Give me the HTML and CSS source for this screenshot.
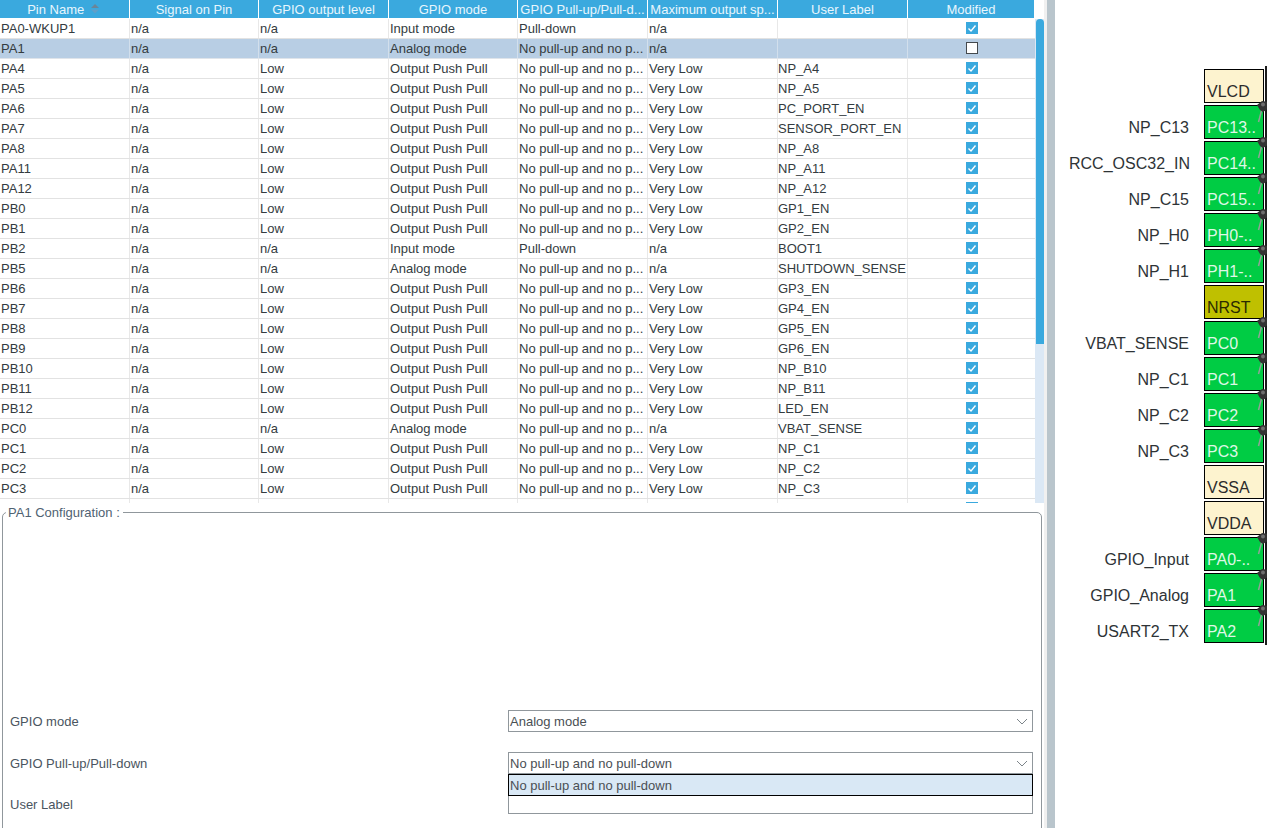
FILE: index.html
```html
<!DOCTYPE html>
<html lang="en">
<head>
<meta charset="utf-8">
<title>Pin configuration</title>
<link rel="stylesheet" href="styles.css">
</head>
<body>
<svg class="defs" width="1" height="1" aria-hidden="true">
  <symbol id="ck" viewBox="0 0 12 12"><rect width="12" height="12" fill="#3aa9de"/><path d="M2.5 6.5 L5 9 L9.5 3.5" fill="none" stroke="#fff" stroke-width="1.4"/></symbol>
  <symbol id="ball" viewBox="0 0 30 30"><path d="M24 9 L20.5 22" stroke="#93a098" stroke-width="1.5"/><path d="M19 5 L24 1 L30 2 L30 9 L25 12 L22 10 Z" fill="#333"/><circle cx="25" cy="4.5" r="2" fill="#6e6e6e"/></symbol>
</svg>
<div class="app">
  <main class="left">
    <div class="tablewrap">
      <div class="table">
        <div class="tbody">
          <div class="row head"><span class="c">Pin Name <svg class="sort" width="8" height="10" viewBox="0 0 8 10"><path d="M4 0 L8 4 H0 Z" fill="#6b8598"/><path d="M0 5.5 H8 L4 9.5 Z" fill="#5f9fc9"/></svg></span><span class="c">Signal on Pin</span><span class="c">GPIO output level</span><span class="c">GPIO mode</span><span class="c">GPIO Pull-up/Pull-d...</span><span class="c">Maximum output sp...</span><span class="c">User Label</span><span class="c">Modified</span></div>
          <div class="row"><span>PA0-WKUP1</span><span>n/a</span><span>n/a</span><span>Input mode</span><span>Pull-down</span><span>n/a</span><span></span><span class="m"><svg class="box"><use href="#ck"/></svg></span></div>
          <div class="row sel"><span>PA1</span><span>n/a</span><span>n/a</span><span>Analog mode</span><span>No pull-up and no p...</span><span>n/a</span><span></span><span class="m"><i class="unck"></i></span></div>
          <div class="row"><span>PA4</span><span>n/a</span><span>Low</span><span>Output Push Pull</span><span>No pull-up and no p...</span><span>Very Low</span><span>NP_A4</span><span class="m"><svg class="box"><use href="#ck"/></svg></span></div>
          <div class="row"><span>PA5</span><span>n/a</span><span>Low</span><span>Output Push Pull</span><span>No pull-up and no p...</span><span>Very Low</span><span>NP_A5</span><span class="m"><svg class="box"><use href="#ck"/></svg></span></div>
          <div class="row"><span>PA6</span><span>n/a</span><span>Low</span><span>Output Push Pull</span><span>No pull-up and no p...</span><span>Very Low</span><span>PC_PORT_EN</span><span class="m"><svg class="box"><use href="#ck"/></svg></span></div>
          <div class="row"><span>PA7</span><span>n/a</span><span>Low</span><span>Output Push Pull</span><span>No pull-up and no p...</span><span>Very Low</span><span>SENSOR_PORT_EN</span><span class="m"><svg class="box"><use href="#ck"/></svg></span></div>
          <div class="row"><span>PA8</span><span>n/a</span><span>Low</span><span>Output Push Pull</span><span>No pull-up and no p...</span><span>Very Low</span><span>NP_A8</span><span class="m"><svg class="box"><use href="#ck"/></svg></span></div>
          <div class="row"><span>PA11</span><span>n/a</span><span>Low</span><span>Output Push Pull</span><span>No pull-up and no p...</span><span>Very Low</span><span>NP_A11</span><span class="m"><svg class="box"><use href="#ck"/></svg></span></div>
          <div class="row"><span>PA12</span><span>n/a</span><span>Low</span><span>Output Push Pull</span><span>No pull-up and no p...</span><span>Very Low</span><span>NP_A12</span><span class="m"><svg class="box"><use href="#ck"/></svg></span></div>
          <div class="row"><span>PB0</span><span>n/a</span><span>Low</span><span>Output Push Pull</span><span>No pull-up and no p...</span><span>Very Low</span><span>GP1_EN</span><span class="m"><svg class="box"><use href="#ck"/></svg></span></div>
          <div class="row"><span>PB1</span><span>n/a</span><span>Low</span><span>Output Push Pull</span><span>No pull-up and no p...</span><span>Very Low</span><span>GP2_EN</span><span class="m"><svg class="box"><use href="#ck"/></svg></span></div>
          <div class="row"><span>PB2</span><span>n/a</span><span>n/a</span><span>Input mode</span><span>Pull-down</span><span>n/a</span><span>BOOT1</span><span class="m"><svg class="box"><use href="#ck"/></svg></span></div>
          <div class="row"><span>PB5</span><span>n/a</span><span>n/a</span><span>Analog mode</span><span>No pull-up and no p...</span><span>n/a</span><span>SHUTDOWN_SENSE</span><span class="m"><svg class="box"><use href="#ck"/></svg></span></div>
          <div class="row"><span>PB6</span><span>n/a</span><span>Low</span><span>Output Push Pull</span><span>No pull-up and no p...</span><span>Very Low</span><span>GP3_EN</span><span class="m"><svg class="box"><use href="#ck"/></svg></span></div>
          <div class="row"><span>PB7</span><span>n/a</span><span>Low</span><span>Output Push Pull</span><span>No pull-up and no p...</span><span>Very Low</span><span>GP4_EN</span><span class="m"><svg class="box"><use href="#ck"/></svg></span></div>
          <div class="row"><span>PB8</span><span>n/a</span><span>Low</span><span>Output Push Pull</span><span>No pull-up and no p...</span><span>Very Low</span><span>GP5_EN</span><span class="m"><svg class="box"><use href="#ck"/></svg></span></div>
          <div class="row"><span>PB9</span><span>n/a</span><span>Low</span><span>Output Push Pull</span><span>No pull-up and no p...</span><span>Very Low</span><span>GP6_EN</span><span class="m"><svg class="box"><use href="#ck"/></svg></span></div>
          <div class="row"><span>PB10</span><span>n/a</span><span>Low</span><span>Output Push Pull</span><span>No pull-up and no p...</span><span>Very Low</span><span>NP_B10</span><span class="m"><svg class="box"><use href="#ck"/></svg></span></div>
          <div class="row"><span>PB11</span><span>n/a</span><span>Low</span><span>Output Push Pull</span><span>No pull-up and no p...</span><span>Very Low</span><span>NP_B11</span><span class="m"><svg class="box"><use href="#ck"/></svg></span></div>
          <div class="row"><span>PB12</span><span>n/a</span><span>Low</span><span>Output Push Pull</span><span>No pull-up and no p...</span><span>Very Low</span><span>LED_EN</span><span class="m"><svg class="box"><use href="#ck"/></svg></span></div>
          <div class="row"><span>PC0</span><span>n/a</span><span>n/a</span><span>Analog mode</span><span>No pull-up and no p...</span><span>n/a</span><span>VBAT_SENSE</span><span class="m"><svg class="box"><use href="#ck"/></svg></span></div>
          <div class="row"><span>PC1</span><span>n/a</span><span>Low</span><span>Output Push Pull</span><span>No pull-up and no p...</span><span>Very Low</span><span>NP_C1</span><span class="m"><svg class="box"><use href="#ck"/></svg></span></div>
          <div class="row"><span>PC2</span><span>n/a</span><span>Low</span><span>Output Push Pull</span><span>No pull-up and no p...</span><span>Very Low</span><span>NP_C2</span><span class="m"><svg class="box"><use href="#ck"/></svg></span></div>
          <div class="row"><span>PC3</span><span>n/a</span><span>Low</span><span>Output Push Pull</span><span>No pull-up and no p...</span><span>Very Low</span><span>NP_C3</span><span class="m"><svg class="box"><use href="#ck"/></svg></span></div>
          <div class="row"><span></span><span></span><span></span><span></span><span></span><span></span><span></span><span class="m"><svg class="box"><use href="#ck"/></svg></span></div>
        </div>
      </div>
      <div class="scrollbar"><div class="thumb"></div></div>
    </div>
    <section class="config">
      <div class="frame">
        <div class="legend">PA1 Configuration :</div>
        <div class="form">
          <div class="field"><label>GPIO mode</label><div class="select"><span>Analog mode</span><svg class="chev" width="12" height="7" viewBox="0 0 12 7"><path d="M1 1 L6 6 L11 1" fill="none" stroke="#7d858a" stroke-width="1"/></svg></div></div>
          <div class="field second"><label>GPIO Pull-up/Pull-down</label>
            <div class="select"><span>No pull-up and no pull-down</span><svg class="chev" width="12" height="7" viewBox="0 0 12 7"><path d="M1 1 L6 6 L11 1" fill="none" stroke="#7d858a" stroke-width="1"/></svg></div>
          </div>
          <div class="field third"><label>User Label</label>
            <div class="inputstack"><div class="option">No pull-up and no pull-down</div><div class="input"></div></div>
          </div>
        </div>
      </div>
    </section>
  </main>
  <div class="splitter"></div>
  <aside class="chip">
    <div class="pins">
      <div class="pin"><span class="lbl"></span><span class="p power">VLCD</span></div>
      <div class="pin"><span class="lbl">NP_C13</span><span class="p go">PC13..<svg class="ball"><use href="#ball"/></svg></span></div>
      <div class="pin"><span class="lbl">RCC_OSC32_IN</span><span class="p go">PC14..<svg class="ball"><use href="#ball"/></svg></span></div>
      <div class="pin"><span class="lbl">NP_C15</span><span class="p go">PC15..<svg class="ball"><use href="#ball"/></svg></span></div>
      <div class="pin"><span class="lbl">NP_H0</span><span class="p go">PH0-..<svg class="ball"><use href="#ball"/></svg></span></div>
      <div class="pin"><span class="lbl">NP_H1</span><span class="p go">PH1-..<svg class="ball"><use href="#ball"/></svg></span></div>
      <div class="pin"><span class="lbl"></span><span class="p rst">NRST</span></div>
      <div class="pin"><span class="lbl">VBAT_SENSE</span><span class="p go">PC0<svg class="ball"><use href="#ball"/></svg></span></div>
      <div class="pin"><span class="lbl">NP_C1</span><span class="p go">PC1<svg class="ball"><use href="#ball"/></svg></span></div>
      <div class="pin"><span class="lbl">NP_C2</span><span class="p go">PC2<svg class="ball"><use href="#ball"/></svg></span></div>
      <div class="pin"><span class="lbl">NP_C3</span><span class="p go">PC3<svg class="ball"><use href="#ball"/></svg></span></div>
      <div class="pin"><span class="lbl"></span><span class="p power">VSSA</span></div>
      <div class="pin"><span class="lbl"></span><span class="p power">VDDA</span></div>
      <div class="pin"><span class="lbl">GPIO_Input</span><span class="p go">PA0-..<svg class="ball"><use href="#ball"/></svg></span></div>
      <div class="pin"><span class="lbl">GPIO_Analog</span><span class="p go">PA1<svg class="ball"><use href="#ball"/></svg></span></div>
      <div class="pin"><span class="lbl">USART2_TX</span><span class="p go">PA2<svg class="ball"><use href="#ball"/></svg></span></div>
    </div>
    <div class="edge"></div>
  </aside>
</div>
</body>
</html>
```
FILE: styles.css
```css
* { box-sizing: border-box; }
html, body { margin: 0; padding: 0; height: 100%; overflow: hidden; background: #fff; }
body { font-family: "Liberation Sans", Arial, sans-serif; font-size: 13px; color: #333b40; }
.defs { position: absolute; left: 0; top: 0; }
.app { display: flex; width: 1267px; height: 828px; }
.left { width: 1044px; display: flex; flex-direction: column; flex: none; }
.tablewrap { display: flex; height: 503px; flex: none; overflow: hidden; }
.table { width: 1035px; flex: none; }
.row { display: grid; grid-template-columns: 130px 129px 130px 129px 130px 130px 130px 127px; height: 20px; border-bottom: 1px solid #e2e2e2; align-items: stretch; }
.row > span { line-height: 19px; padding-left: 1px; white-space: nowrap; overflow: hidden; border-right: 1px solid #e8e8e8; }
.row > span:nth-child(7) { padding-left: 0; }
.row > span:last-child { border-right: 0; }
.row.sel { background: #b8cee4; border-bottom-color: #dfe4ea; }
.row.sel > span { border-right-color: #d2dfec; }
.row.head { height: 19px; border-bottom: 1px solid #fff; background: #fff; }
.row.head .c { background: #3aa9de; color: #e8f6fd; text-align: center; line-height: 19px; border-right: 1px solid #fff; padding: 0; }
.sort { vertical-align: 0; margin-left: 3px; margin-right: 3px; }
.row > .m { display: flex; align-items: center; justify-content: center; padding: 0 0 1px; }
.box { width: 12px; height: 12px; display: block; }
.unck { display: block; width: 12px; height: 12px; background: #fff; border: 1px solid #44494d; }
.scrollbar { width: 9px; margin-top: 19px; background: #dbe8f5; flex: none; }
.thumb { height: 325px; background: #3aa9de; border-radius: 4px 4px 0 0; margin-left: 1px; width: 8px; }
.config { flex: 1; min-height: 0; padding: 9px 2px 0 2px; overflow: hidden; }
.frame { position: relative; height: 340px; border: 1px solid #90979c; border-radius: 5px 5px 0 0; }
.legend { position: absolute; left: 3px; top: -7px; background: #fff; padding: 0 3px 0 2px; line-height: 14px; color: #4f6272; }
.form { padding: 197px 8px 0 7px; }
.field { display: flex; justify-content: space-between; align-items: center; height: 22px; }
.field label { color: #4a5560; }
.second { margin-top: 20px; }
.third { margin-top: 0; align-items: flex-start; height: 40px; }
.third label { margin-top: 24px; line-height: 14px; }
.select { width: 525px; height: 22px; border: 1px solid #90979c; display: flex; align-items: center; justify-content: space-between; padding: 0 4px 0 1px; background: #fff; color: #4a4f54; }
.inputstack { width: 525px; }
.option { height: 22px; background: #d9e8f5; border: 1px solid #000; line-height: 21px; padding-left: 1px; color: #4a4f54; }
.input { height: 18px; border: 1px solid #90979c; border-top: 0; }
.splitter { width: 11px; flex: none; background: linear-gradient(to right, #f0f0f0 3px, #b9c5cc 3px); }
.chip { flex: 1; display: flex; align-items: flex-start; padding-top: 69px; justify-content: flex-end; }
.pins { display: flex; flex-direction: column; gap: 2px; }
.pin { display: flex; height: 34px; align-items: center; }
.lbl { width: 135px; padding-right: 15px; padding-top: 12px; text-align: right; font-size: 16px; color: #2e3336; white-space: nowrap; }
.p { position: relative; width: 60px; height: 34px; border: 1px solid #000; font-size: 16px; padding: 12px 0 0 2px; line-height: 20px; white-space: nowrap; overflow: visible; }
.power { background: #fdf3cf; color: #2b2b2b; }
.go { background: #00cc44; color: #dff8e6; }
.rst { background: #bfc000; color: #2b2b00; }
.ball { position: absolute; left: 33px; top: -6px; width: 30px; height: 30px; z-index: 2; }
.edge { width: 2px; height: 579px; background: #1c1c1c; margin-left: 1px; margin-top: -3px; }
```
